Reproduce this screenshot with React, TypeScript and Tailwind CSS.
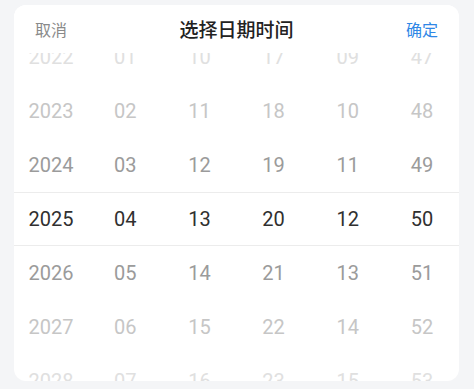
const columns: string[][] = [
  ["2022", "2023", "2024", "2025", "2026", "2027", "2028"],
  ["01", "02", "03", "04", "05", "06", "07"],
  ["10", "11", "12", "13", "14", "15", "16"],
  ["17", "18", "19", "20", "21", "22", "23"],
  ["09", "10", "11", "12", "13", "14", "15"],
  ["47", "48", "49", "50", "51", "52", "53"],
];

// colour by distance from the selected row (index 3)
const shades = ["text-[#303030]", "text-[#9b9b9b]", "text-[#c6c6c6]", "text-[#e0e0e0]"];

const App = (): React.JSX.Element => {
  return (
    <div
      className="w-[474px] h-[389px] bg-[#f4f5f7] pt-[5px] pl-[14px] pr-[15px] pb-[8px]"
      style={{ fontFamily: 'Roboto, "Noto Sans CJK SC", sans-serif' }}
    >
      <div className="h-full bg-white rounded-xl flex flex-col overflow-hidden">
        {/* Header */}
        <div className="relative z-10 bg-white h-[48px] shrink-0 flex items-center justify-between pt-[4px] px-[21px]">
          <span className="text-[16px] text-[#8a8a8a]">取消</span>
          <span className="text-[19px] font-medium text-[#222]">选择日期时间</span>
          <span className="text-[16px] text-[#2f87e6]">确定</span>
        </div>

        {/* Wheels */}
        <div className="relative flex-1 overflow-hidden">
          <div className="grid grid-cols-6 -mt-[23px]">
            {columns.map((col, ci) => (
              <div key={ci} className="flex flex-col">
                {col.map((v, ri) => (
                  <div
                    key={ri}
                    className={`h-[54px] flex items-center justify-center text-[20px] ${shades[Math.abs(ri - 3)]}`}
                  >
                    {v}
                  </div>
                ))}
              </div>
            ))}
          </div>
          {/* selection band */}
          <div className="pointer-events-none absolute left-0 right-0 top-[139px] h-[54px] border-y border-[#ececec]" />
        </div>
      </div>
    </div>
  );
};

export default App;
